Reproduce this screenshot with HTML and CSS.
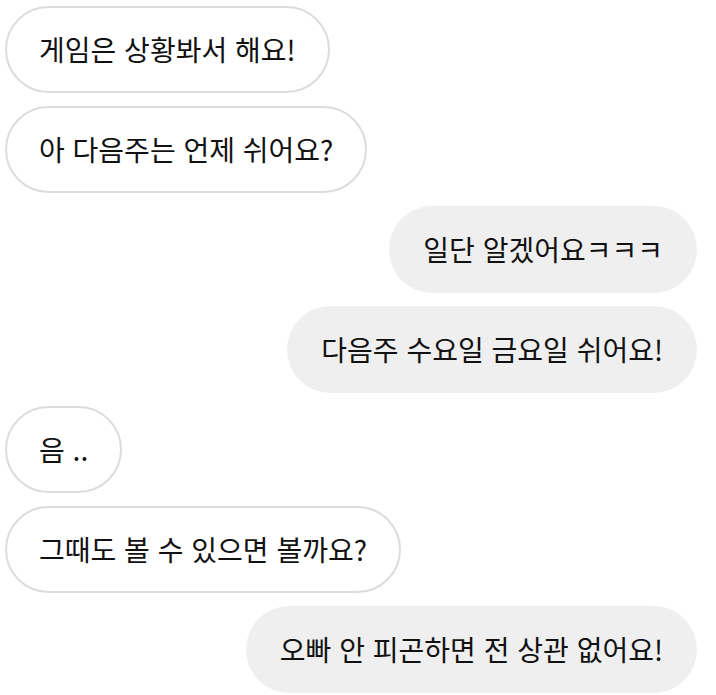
FILE: index.html
```html
<!DOCTYPE html>
<html lang="ko">
<head>
  <meta charset="UTF-8" />
  <meta name="viewport" content="width=device-width, initial-scale=1.0" />
  <title>Chat</title>
  <link rel="stylesheet" href="styles.css">
</head>
<body>
  <div class="chat">
    <div class="msg them">게임은 상황봐서 해요!</div>
    <div class="msg them">아 다음주는 언제 쉬어요?</div>
    <div class="msg me">일단 알겠어요ㅋㅋㅋ</div>
    <div class="msg me">다음주 수요일 금요일 쉬어요!</div>
    <div class="msg them">음 ..</div>
    <div class="msg them">그때도 볼 수 있으면 볼까요?</div>
    <div class="msg me">오빠 안 피곤하면 전 상관 없어요!</div>
  </div>
</body>
</html>
```

FILE: styles.css
```css
* {
  margin: 0;
  padding: 0;
  box-sizing: border-box;
}

body {
  background: #fff;
  color: #111;
  font-family: 'Noto Sans CJK KR', 'Noto Sans', sans-serif;
}

.chat {
  display: flex;
  flex-direction: column;
  gap: 13px;
  padding: 6px 19px 0 5px;
}

.msg {
  font-size: 28px;
  line-height: 33px;
  padding: 25px 32px;
  border-radius: 44px;
  border: 2px solid transparent;
  white-space: nowrap;
}

.them {
  align-self: flex-start;
  border-color: #dcdcdc;
  background: #fff;
}

.me {
  align-self: flex-end;
  background: #efefef;
}
```
